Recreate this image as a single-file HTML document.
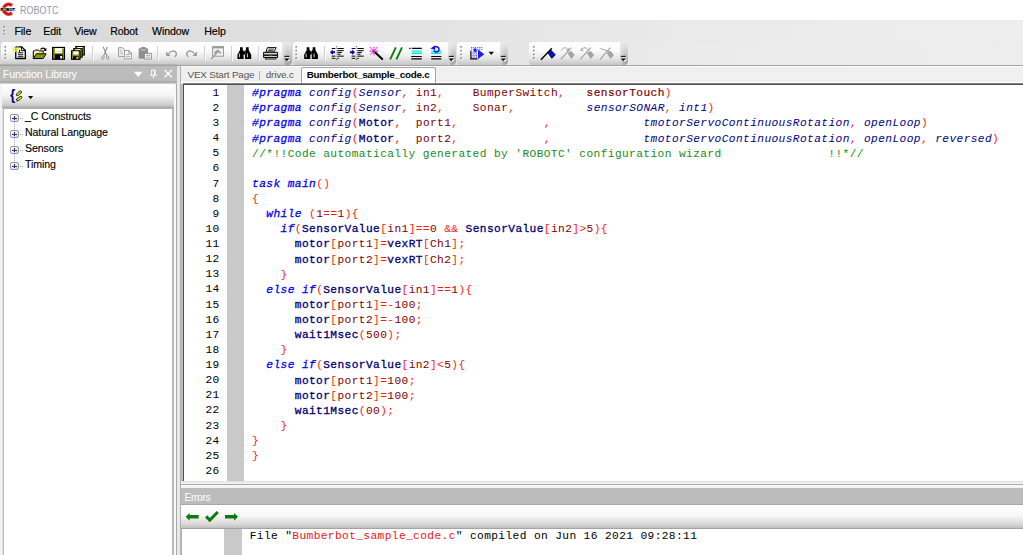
<!DOCTYPE html>
<html lang="en">
<head>
<meta charset="utf-8">
<title>ROBOTC</title>
<style>
*{box-sizing:border-box;margin:0;padding:0}
html,body{width:1023px;height:555px;overflow:hidden;background:#fff}
body{position:relative;font-family:"Liberation Sans",sans-serif;font-size:10.4px;color:#000}
.abs{position:absolute}
/* title bar */
#title{left:0;top:0;width:1023px;height:20px;background:#fff}
#title .cap{left:20px;top:3px;font-size:11px;line-height:14px;color:#9898a6;white-space:nowrap;transform:scaleX(0.816);transform-origin:0 0}
/* menu bar */
#menu{left:0;top:20px;width:1023px;height:22px;background:linear-gradient(90deg,#d9d9d9 0,#e0e0e0 300px,#eaeaea 700px,#eeeeee 100%)}
#menu span{position:absolute;top:4px;line-height:14px;font-size:10.6px;white-space:nowrap;letter-spacing:-0.1px;-webkit-text-stroke:0.18px #000}
/* toolbar row */
#tbrow{left:0;top:42px;width:1023px;height:23px;background:linear-gradient(90deg,#d8d8d8 0,#dedede 300px,#ebebeb 700px,#ededed 100%)}
.tb{position:absolute;top:0;height:22.5px;border-radius:3px 0 0 3px;background:linear-gradient(180deg,#fff 0,#fbfbfb 38%,#e6e6e6 70%,#c5c5c5 100%)}
.tbcap{position:absolute;top:0;height:22.5px;border-radius:0 4px 4px 0;background:linear-gradient(90deg,rgba(236,236,236,.75) 0,rgba(236,236,236,0) 4.5px),linear-gradient(180deg,#ebebeb 0,#d0d0d0 40%,#b2b2b2 75%,#a2a2a2 100%)}
.grip{position:absolute;width:2px;height:13px;top:4.5px;background:repeating-linear-gradient(180deg,#8c8c8c 0,#8c8c8c 1.2px,rgba(255,255,255,.9) 1.2px,rgba(255,255,255,.9) 2.2px,transparent 2.2px,transparent 3.55px)}
.sep{position:absolute;top:4.3px;width:1px;height:14.7px;background:#d0d0d0;box-shadow:1px 0 0 #fcfcfc}
.ic{position:absolute;top:4px;width:14.2px;height:14.2px;overflow:visible}
.rowline{left:0;top:65px;width:1023px;height:1px;background:#a2a2a2}
/* left panel */
#lp{left:0;top:66px;width:184px;height:489px;background:linear-gradient(90deg,#f3f3f3 0,#f3f3f3 2.2px,#f8f8f8 2.2px,#f8f8f8 176px,#a9a9a9 176px,#a9a9a9 177.3px,#e9e9e9 177.3px,#e9e9e9 179.8px,#b2b2b2 179.8px,#b2b2b2 181px,#c6c6c6 183px,#c6c6c6 184px)}
#lphead{left:0;top:0;width:176.5px;height:14.9px;background:#bcbcbc;box-shadow:0 1.7px 0 #a8a8a8,0 3px 0 #cbcbcb;color:#fff;font-size:10.7px;line-height:16px;padding-left:2.8px;letter-spacing:-0.17px;white-space:nowrap}
#lptool{left:2.4px;top:18.2px;width:171.4px;height:23.8px;border-radius:2px 2px 0 0;background:linear-gradient(180deg,#fff 0,#f6f6f6 45%,#d0d0d0 85%,#b4b4b4 97%,#a4a4a4 100%)}
#tree{left:3px;top:42px;width:170.8px;height:447px;background:#fff;border-left:1px solid #bdbdbd;border-top:1px solid #b0b0b0;border-right:2px solid #b9b9b9;box-shadow:-1px 0 0 #dedede}
.tl{-webkit-text-stroke:0.12px #000;position:absolute;left:20.9px;font-size:10.6px;line-height:14px;white-space:nowrap;letter-spacing:-0.08px}
.pm{position:absolute;left:6.4px;width:8.3px;height:8.3px;border:1px solid #959595;border-radius:1.8px;background:linear-gradient(135deg,#fff,#d8d8d8)}
.pm:before{content:"";position:absolute;left:1.1px;top:2.65px;width:4.1px;height:1px;background:#1c2f8a}
.pm:after{content:"";position:absolute;left:2.65px;top:1.1px;width:1px;height:4.1px;background:#1c2f8a}
/* editor */
#tabs{left:181px;top:66px;width:842px;height:18px;background:linear-gradient(180deg,#fdfdfd 0,#fdfdfd 1px,#efefef 1px,#f0f0f0 15.4px,#fbfbfb 15.6px,#fbfbfb 100%)}
#tabs span{position:absolute;white-space:nowrap;font-size:9.9px;line-height:14px;top:2px;color:#555;letter-spacing:-0.17px}
#edtop{left:182.6px;top:83.4px;width:841px;height:1.6px;background:linear-gradient(180deg,#9c9c9c,#3a3a3a)}
#ed{left:183px;top:85px;width:840px;height:396px;background:#fff;border-left:1px solid #4e4e4e}
.gut{position:absolute;background:#c9c9c9}
pre{position:absolute;font-family:"Liberation Mono",monospace;font-size:11.2px;letter-spacing:0.379px;line-height:15.12px;white-space:pre;color:#000}
.k{color:#0000f0;font-style:italic;-webkit-text-stroke:0.27px #0000f0}
.n{color:#000080;font-style:italic}
.b{color:#000070;-webkit-text-stroke:0.3px #000070}
.p{color:#ff1a10}
.m{color:#800000}
.mb{color:#800000;-webkit-text-stroke:0.2px #800000}
.g{color:#1a8c1a}
/* errors */
#errhead{left:181px;top:488px;width:842px;height:17px;background:#bcbcbc;color:#fff;font-size:10.2px;line-height:19.6px;padding-left:3.4px;letter-spacing:-0.3px;border-bottom:1px solid #a6a6a6}
#errtool{left:181px;top:505px;width:842px;height:22.5px;background:linear-gradient(180deg,#fff 0,#f8f8f8 45%,#d6d6d6 86%,#bebebe 100%)}
#errout{left:181px;top:528px;width:842px;height:27px;background:#fff;border-top:1px solid #a4a4a4;border-left:1px solid #b4b4b4}
</style>
</head>
<body>
<!-- TITLE -->
<div id="title" class="abs">
  <svg class="abs" style="left:0;top:0" width="18" height="20" viewBox="0 0 18 20">
    <path d="M11.9 5.6 A4.9 4.9 0 1 0 11.9 12.8" fill="none" stroke="#d8161c" stroke-width="3.3"/>
    <path d="M12.6 4.3 A6.3 6.3 0 1 0 12.6 14.1" fill="none" stroke="#e03a3e" stroke-width="1" stroke-dasharray="1.5 1.3"/>
    <rect x="0.4" y="7.7" width="14.8" height="3.3" fill="#fff"/>
    <text x="0.6" y="10.8" font-family="Liberation Sans, sans-serif" font-weight="bold" font-size="4.2" fill="#000" stroke="#000" stroke-width="0.25" textLength="14.4" lengthAdjust="spacingAndGlyphs">ROBOT</text>
    <circle cx="4.7" cy="9.4" r="0.7" fill="#e8c800"/>
  </svg>
  <div class="abs cap">ROBOTC</div>
</div>
<!-- MENU -->
<div id="menu" class="abs">
  <svg class="abs" style="left:0;top:0" width="10" height="22" viewBox="0 0 10 22"><rect x="4.4" y="6.9" width="1.6" height="1.6" fill="#fff"/><rect x="3.6" y="6.1" width="1.6" height="1.6" fill="#858585"/><rect x="4.4" y="10.6" width="1.6" height="1.6" fill="#fff"/><rect x="3.6" y="9.8" width="1.6" height="1.6" fill="#858585"/><rect x="4.4" y="14.0" width="1.6" height="1.6" fill="#fff"/><rect x="3.6" y="13.2" width="1.6" height="1.6" fill="#858585"/></svg>
  <span style="left:14.5px">File</span>
  <span style="left:43.3px">Edit</span>
  <span style="left:74.3px">View</span>
  <span style="left:110.2px">Robot</span>
  <span style="left:152px">Window</span>
  <span style="left:204.3px">Help</span>
</div>
<!-- TOOLBARS -->
<div id="tbrow" class="abs">
  <div class="tb" style="left:1px;width:281px"></div><div class="tbcap" style="left:282px;width:10px"></div>
  <div class="tb" style="left:292.5px;width:155px"></div><div class="tbcap" style="left:447.5px;width:8.5px"></div>
  <div class="tb" style="left:457px;width:42.5px"></div><div class="tbcap" style="left:499.5px;width:8.5px"></div>
  <div class="tb" style="left:529px;width:90.5px"></div><div class="tbcap" style="left:619.5px;width:8.5px"></div>
  <svg class="abs" style="left:0;top:0" width="540" height="23" viewBox="0 0 540 23"><rect x="5.3" y="4.8" width="1.6" height="1.6" fill="#fff"/><rect x="4.5" y="4.0" width="1.6" height="1.6" fill="#858585"/><rect x="5.3" y="8.6" width="1.6" height="1.6" fill="#fff"/><rect x="4.5" y="7.8" width="1.6" height="1.6" fill="#858585"/><rect x="5.3" y="12.4" width="1.6" height="1.6" fill="#fff"/><rect x="4.5" y="11.6" width="1.6" height="1.6" fill="#858585"/><rect x="5.3" y="16.1" width="1.6" height="1.6" fill="#fff"/><rect x="4.5" y="15.3" width="1.6" height="1.6" fill="#858585"/><rect x="296.2" y="4.8" width="1.6" height="1.6" fill="#fff"/><rect x="295.4" y="4.0" width="1.6" height="1.6" fill="#858585"/><rect x="296.2" y="8.6" width="1.6" height="1.6" fill="#fff"/><rect x="295.4" y="7.8" width="1.6" height="1.6" fill="#858585"/><rect x="296.2" y="12.4" width="1.6" height="1.6" fill="#fff"/><rect x="295.4" y="11.6" width="1.6" height="1.6" fill="#858585"/><rect x="296.2" y="16.1" width="1.6" height="1.6" fill="#fff"/><rect x="295.4" y="15.3" width="1.6" height="1.6" fill="#858585"/><rect x="461.0" y="4.8" width="1.6" height="1.6" fill="#fff"/><rect x="460.2" y="4.0" width="1.6" height="1.6" fill="#858585"/><rect x="461.0" y="8.6" width="1.6" height="1.6" fill="#fff"/><rect x="460.2" y="7.8" width="1.6" height="1.6" fill="#858585"/><rect x="461.0" y="12.4" width="1.6" height="1.6" fill="#fff"/><rect x="460.2" y="11.6" width="1.6" height="1.6" fill="#858585"/><rect x="461.0" y="16.1" width="1.6" height="1.6" fill="#fff"/><rect x="460.2" y="15.3" width="1.6" height="1.6" fill="#858585"/><rect x="533.8" y="4.8" width="1.6" height="1.6" fill="#fff"/><rect x="533.0" y="4.0" width="1.6" height="1.6" fill="#858585"/><rect x="533.8" y="8.6" width="1.6" height="1.6" fill="#fff"/><rect x="533.0" y="7.8" width="1.6" height="1.6" fill="#858585"/><rect x="533.8" y="12.4" width="1.6" height="1.6" fill="#fff"/><rect x="533.0" y="11.6" width="1.6" height="1.6" fill="#858585"/><rect x="533.8" y="16.1" width="1.6" height="1.6" fill="#fff"/><rect x="533.0" y="15.3" width="1.6" height="1.6" fill="#858585"/></svg>
  <div class="sep" style="left:91.5px"></div>
  <div class="sep" style="left:157px"></div>
  <div class="sep" style="left:204px"></div>
  <div class="sep" style="left:230.5px"></div>
  <div class="sep" style="left:257.5px"></div>
  <div class="sep" style="left:324px"></div>
<!--ICONS-START-->
  <svg class="abs" style="left:0;top:0" width="1023" height="23" viewBox="0 42 1023 23" shape-rendering="geometricPrecision">
    <defs>
      <g id="binoc">
        <path d="M3.2 1.4 H6.2 V4 L7.2 5 V14.2 H0.4 V9.5 L3.2 4.4 Z M12.8 1.4 H9.8 V4 L8.8 5 V14.2 H15.6 V9.5 L12.8 4.4 Z M7 5.6 H9 V9.4 H7 Z" fill="#000"/>
        <path d="M2.6 8.2 V12.4 M11.4 8.2 V12.4" stroke="#fff" stroke-width="0.9"/>
      </g>
      <g id="capar">
        <path d="M0.6 1.2 H5.6" stroke="#fff" stroke-width="1.1"/>
        <path d="M0.8 3.4 H6 L3.4 6.2 Z" fill="#fff"/>
        <path d="M0 0.5 H5" stroke="#111" stroke-width="1.1"/>
        <path d="M0 2.6 H5 L2.5 5.3 Z" fill="#111"/>
      </g>
      <g id="gflag">
        <path d="M0.5 14.9 L12.2 1.6" stroke="#9d9d9d" stroke-width="1.2" fill="none"/>
        <path d="M7.9 7.6 L11.9 5.2 L16.2 10 L12.2 14.4 Z" fill="#a4a4a4"/>
      </g>
    </defs>
    <!-- 1 new -->
    <g transform="translate(12,45.7) scale(0.89)">
      <path d="M4.2 1.3 H11 L15 5.3 V14.4 H4.2 Z" fill="#fff" stroke="#000" stroke-width="1.5" stroke-linejoin="round"/>
      <path d="M10.6 1.3 V5.6 H15" fill="none" stroke="#000" stroke-width="1.1"/>
      <path d="M6.5 8 H12.7 M6.5 10.2 H12.7 M6.5 12.4 H12.7 M8.6 4.6 V7.4" stroke="#000" stroke-width="1.1"/>
      <path d="M1 0.6 L7 6.6 M7 0.6 L1 6.6 M4 0 V7.2 M0.3 3.6 H7.7" stroke="#e8e800" stroke-width="1.15" stroke-dasharray="2 0.5"/>
    </g>
    <!-- 2 open -->
    <g transform="translate(32.5,46.1) scale(0.89)">
      <path d="M0.9 14 V5.4 H2 L3 4.4 H6.4 L7.4 5.4 H12 V8" fill="#f4e9a2" stroke="#000" stroke-width="1.1" stroke-linejoin="round"/>
      <path d="M0.9 14 L4.4 8.6 H15.3 L12 14 Z" fill="#8c9418" stroke="#000" stroke-width="1.1" stroke-linejoin="round"/>
      <path d="M9 3.8 C10.4 1.6 13.2 1.6 14.4 4.2" fill="none" stroke="#000" stroke-width="1.4"/>
      <path d="M15.6 1.8 V5.4 H12.2 Z" fill="#000"/>
    </g>
    <!-- 3 save -->
    <g transform="translate(51.4,46.2) scale(0.89)">
      <rect x="1.4" y="1.4" width="13.3" height="13.3" fill="#8e9018" stroke="#000" stroke-width="1.3"/>
      <rect x="4" y="2.1" width="8" height="5.6" fill="#fff"/>
      <path d="M4 6 H12" stroke="#c8c8c8" stroke-width="0.8"/>
      <rect x="3.8" y="9.1" width="9" height="5.4" fill="#000"/>
      <rect x="9.8" y="10.9" width="2.3" height="2.9" fill="#fff"/>
      <rect x="12.8" y="2.2" width="1" height="1" fill="#fff"/>
    </g>
    <!-- 4 save all -->
    <g transform="translate(70.8,45.7) scale(0.89)">
      <rect x="5.6" y="0.9" width="9.6" height="9.6" fill="#8a8a1c" stroke="#000" stroke-width="1.2"/>
      <rect x="7.6" y="1.4" width="5.6" height="2" fill="#fff"/>
      <rect x="3.2" y="3.3" width="9.6" height="9.6" fill="#8a8a1c" stroke="#000" stroke-width="1.2"/>
      <rect x="5.2" y="3.9" width="5.6" height="2" fill="#fff"/>
      <rect x="0.8" y="5.7" width="9.6" height="9.6" fill="#8a8a1c" stroke="#000" stroke-width="1.2"/>
      <rect x="2.8" y="6.3" width="5.8" height="3.6" fill="#fff"/>
      <rect x="2.6" y="11.8" width="6" height="3.4" fill="#000"/>
      <rect x="6.4" y="12.6" width="1.4" height="2.2" fill="#fff"/>
    </g>
    <!-- 5 cut -->
    <g transform="translate(98,46.1) scale(0.89)" fill="none" stroke="#8f8f8f">
      <path d="M5.8 0.8 L10 10.8 M10.6 0.8 L6.4 10.8" stroke-width="1.15"/>
      <ellipse cx="5.5" cy="12.9" rx="1.3" ry="2.1" transform="rotate(18 5.5 12.9)" stroke-width="0.95"/>
      <ellipse cx="10.9" cy="12.9" rx="1.3" ry="2.1" transform="rotate(-18 10.9 12.9)" stroke-width="0.95"/>
    </g>
    <!-- 6 copy -->
    <g transform="translate(117.8,46.1) scale(0.89)" stroke="#939393" stroke-width="1">
      <path d="M0.8 1.8 H5.4 L7.6 4 V11.6 H0.8 Z" fill="#f3f3f3"/>
      <path d="M2.2 4.6 H5 M2.2 6.6 H6 M2.2 8.6 H6" stroke="#b5b5b5" stroke-width="0.9"/>
      <path d="M7.6 5 H12.6 L15.4 7.8 V14.2 H7.6 Z" fill="#fbfbfb"/>
      <path d="M12.4 5.2 V8 H15.2" fill="none"/>
      <path d="M9.2 9.4 H13.8 M9.2 11.6 H13.8" stroke-width="0.9"/>
    </g>
    <!-- 7 paste -->
    <g transform="translate(138,46.1) scale(0.89)">
      <rect x="0.8" y="2.4" width="10.4" height="11.8" rx="1" fill="#8f8f8f"/>
      <rect x="3.4" y="1.1" width="5.2" height="2.6" rx="0.8" fill="#8f8f8f"/>
      <path d="M3.2 4.4 H8.8" stroke="#dcdcdc" stroke-width="0.9"/>
      <rect x="7.4" y="8.2" width="7.6" height="6.4" fill="#f5f5f5" stroke="#8f8f8f" stroke-width="1"/>
      <path d="M9 10.6 H13.4 M9 12.6 H13.4" stroke="#9a9a9a" stroke-width="0.9"/>
    </g>
    <!-- 8 undo -->
    <g transform="translate(164.5,46.1) scale(0.89)">
      <path d="M4.6 8.6 C6.4 5 11.4 4.6 13 7.4 C14 9.4 12.8 11 11.4 12" fill="none" stroke="#9b9b9b" stroke-width="1.5"/>
      <path d="M1.8 6 V11.2 H7 Z" fill="#9b9b9b"/>
    </g>
    <!-- 9 redo -->
    <g transform="translate(198.6,46.1) scale(-0.89,0.89)">
      <path d="M4.6 8.6 C6.4 5 11.4 4.6 13 7.4 C14 9.4 12.8 11 11.4 12" fill="none" stroke="#9b9b9b" stroke-width="1.5"/>
      <path d="M1.8 6 V11.2 H7 Z" fill="#9b9b9b"/>
    </g>
    <!-- 10 compile -->
    <g transform="translate(210.5,46) scale(0.89)">
      <rect x="2.4" y="0.7" width="12.2" height="10.8" fill="#f0f0f0" stroke="#9a9a9a" stroke-width="1.1"/>
      <rect x="2.4" y="0.7" width="12.2" height="1.9" fill="#9a9a9a"/>
      <path d="M3.8 7.2 L8 3.8 L12.4 7.6 L10.4 8.6 L8.4 6.8 L5.4 8.6 Z" fill="#9a9a9a"/>
      <path d="M7.6 7 L0.9 14.6" stroke="#9a9a9a" stroke-width="1.4"/>
    </g>
    <!-- 11 binoculars -->
    <use href="#binoc" transform="translate(237.1,46.1) scale(0.905)"/>
    <!-- 12 print -->
    <g transform="translate(262.8,46.1) scale(0.89)">
      <path d="M5.2 1.7 H15 L12.6 6.6 H3.6 Z" fill="#fff" stroke="#000" stroke-width="1.1" stroke-linejoin="round"/>
      <path d="M6.4 3.4 H12.6 M5.8 4.9 H11.8" stroke="#000" stroke-width="0.8"/>
      <path d="M0.9 7 H16.6 V12.8 H0.9 Z" fill="#d6d6d6" stroke="#000" stroke-width="1.1"/>
      <path d="M1.4 10.2 H16.2" stroke="#000" stroke-width="1.6"/>
      <rect x="7" y="10.8" width="3.6" height="1.3" fill="#e8e000"/>
      <path d="M2.4 13.2 H15.2 V15 H2.4 Z" fill="#000"/>
      <path d="M3 14 H14.6" stroke="#d0d0d0" stroke-width="0.7"/>
    </g>
    <!-- 13 binoculars -->
    <use href="#binoc" transform="translate(303.8,46.1) scale(0.905)"/>
    <!-- 14 outdent -->
    <g transform="translate(329.7,46) scale(0.89)">
      <path d="M2.2 2.8 H6.4 M8.6 2.8 H15.8 M8.6 5.2 H15.8 M8.6 7.2 H13.6 M8.6 9.2 H12.2 M2.2 11.4 H6.4 M8.6 11.4 H15.8 M2.2 13.8 H6.4 M8.6 13.8 H10.4" stroke="#000" stroke-width="1.1"/>
      <path d="M7.5 0.4 V1.4 M7.5 14.8 V15.8" stroke="#000" stroke-width="1"/><path d="M7.5 2.2 V14.4" stroke="#000" stroke-opacity="0.45" stroke-width="0.9" stroke-dasharray="1 1.3"/>
      <path d="M0.2 7.1 L3.2 4.3 L4 6 H6 V8.2 H4 L3.2 9.9 Z" fill="#0c0ca8"/>
    </g>
    <!-- 15 indent -->
    <g transform="translate(349.7,46) scale(0.89)">
      <path d="M2.2 2.8 H6.4 M8.6 2.8 H15.8 M8.6 5.2 H15.8 M8.6 7.2 H13.6 M8.6 9.2 H12.2 M2.2 11.4 H6.4 M8.6 11.4 H15.8 M2.2 13.8 H6.4 M8.6 13.8 H10.4" stroke="#000" stroke-width="1.1"/>
      <path d="M7.5 0.4 V1.4 M7.5 14.8 V15.8" stroke="#000" stroke-width="1"/><path d="M7.5 2.2 V14.4" stroke="#000" stroke-opacity="0.45" stroke-width="0.9" stroke-dasharray="1 1.3"/>
      <path d="M6 7.1 L3 4.3 L2.2 6 H0.2 V8.2 H2.2 L3 9.9 Z" fill="#0c0ca8"/>
    </g>
    <!-- 16 wand -->
    <g>
      <path d="M370.2 47.4 L377.6 54.8 M377.6 47.4 L370.2 54.8 M373.9 46.8 V55.4 M369.6 51.1 H378.2" stroke="#f418f4" stroke-width="1.15" stroke-dasharray="1.5 0.5"/>
      <path d="M374.2 51.4 L382.2 59" stroke="#000" stroke-width="2" stroke-linecap="round"/>
      <path d="M373.6 50.6 L375.4 52.4" stroke="#777" stroke-width="1.6"/>
    </g>
    <!-- 17 comment -->
    <path d="M390.2 59.4 L395.8 47.4 M396.4 59.4 L402 47.4" stroke="#0c7c0c" stroke-width="1.9"/>
    <!-- 18 lines -->
    <g>
      <path d="M409.2 48.4 H410.6 M411.8 48.4 H421.8 M411.2 56.5 H421.8 M411.2 58.9 H421.8" stroke="#000" stroke-width="1.1"/>
      <path d="M411.8 51.1 H421.8 M411.8 53.2 H421.8" stroke="#00e6e6" stroke-width="1.35"/>
    </g>
    <!-- 19 uncomment -->
    <g>
      <path d="M431.2 51.1 H441.4 M431.2 53.2 H441.4" stroke="#00e6e6" stroke-width="1.35"/>
      <path d="M431.2 56.5 H441.4 M431.2 58.9 H441.4" stroke="#000" stroke-width="1.1"/>
      <path d="M433.9 50.6 A2.7 2.7 0 1 0 434.6 47.2" fill="none" stroke="#1414d0" stroke-width="1.5"/>
      <path d="M430.4 48.6 L434.8 45.6 L435.4 50 Z" fill="#1414d0"/>
    </g>
    <!-- 20 run -->
    <g>
      <path d="M470.9 50.8 V58.9 H477.4" fill="none" stroke="#000" stroke-width="1.2"/>
      <path d="M471.2 47.6 H483 M471.2 49.3 H483" stroke="#2222ee" stroke-width="0.9" stroke-dasharray="1 1"/>
      <path d="M472.6 52 H477 M472.6 53.7 H477 M472.6 55.4 H477 M472.6 57.1 H477" stroke="#2222ee" stroke-width="0.9" stroke-dasharray="0.9 0.9"/>
      <path d="M474 48.4 H476.4 V50.4 H477.4 L475.2 52.4 L473 50.4 H474 Z" fill="#1c1cf0"/>
      <path d="M478 49.6 V59 L484.3 54.3 Z" fill="#1c1cf0"/>
      <path d="M488.5 51.8 H494 L491.25 55 Z" fill="#111"/>
    </g>
    <!-- 21 flag -->
    <g>
      <path d="M540.9 59.7 L551.8 48.3" stroke="#000" stroke-width="1.4"/>
      <path d="M547.8 52.6 L551 50.2 L555.3 54.9 L551.8 58.3 Z" fill="#0a0ae6" stroke="#000" stroke-width="0.9" stroke-linejoin="round"/>
    </g>
    <!-- 22-24 gray flags -->
    <g transform="translate(560.4,46.2) scale(0.89)">
      <use href="#gflag"/>
      <path d="M1.2 4.6 C2.6 1.2 6.8 0.8 8.6 3.8" fill="none" stroke="#a2a2a2" stroke-width="1.1"/>
      <path d="M9.6 1.8 V5.4 H6.2 Z" fill="#a2a2a2"/>
    </g>
    <g transform="translate(579.8,46.2) scale(0.89)">
      <use href="#gflag"/>
      <path d="M2 3.8 C3.8 0.8 8 1.2 9.4 4.6" fill="none" stroke="#a2a2a2" stroke-width="1.1"/>
      <path d="M1 1.8 V5.4 H4.4 Z" fill="#a2a2a2"/>
    </g>
    <g transform="translate(599.6,46.2) scale(0.89)">
      <use href="#gflag"/>
      <path d="M0.8 2.7 L12.3 6.3" fill="none" stroke="#a2a2a2" stroke-width="1.1"/>
    </g>
    <!-- cap arrows -->
    <use href="#capar" transform="translate(284.4,55.9)"/>
    <use href="#capar" transform="translate(448.8,55.9)"/>
    <use href="#capar" transform="translate(500.8,55.9)"/>
    <use href="#capar" transform="translate(620.8,55.9)"/>
  </svg>
<!--ICONS-END-->
</div>
<div class="abs rowline"></div>
<div class="abs" style="left:0;top:64.2px;width:177px;height:1px;background:#b2b2b2"></div>
<!-- LEFT PANEL -->
<div id="lp" class="abs">
  <div id="lphead" class="abs">Function Library</div>
  <svg class="abs" style="left:130px;top:0" width="47" height="17" viewBox="130 66 47 17">
    <path d="M134 71.8 H142.4 L138.2 77 Z" fill="#fff"/>
    <path d="M151.6 75 V70 H155.2 V75 M154.4 70 V75" fill="none" stroke="#fff" stroke-width="0.9"/>
    <path d="M150 75.2 H156.9 M153.4 75.2 V78.4" stroke="#fff" stroke-width="1"/>
    <path d="M164.5 70 L171.8 77.2 M171.8 70 L164.5 77.2" stroke="#fff" stroke-width="1.3"/>
  </svg>
  <div id="lptool" class="abs">
    <div class="abs" style="left:8px;top:3.3px;font-family:'Liberation Sans',sans-serif;font-weight:bold;font-size:14.2px;line-height:16px;color:#000080;transform:scaleX(0.95);transform-origin:0 0">{</div>
    <svg class="abs" style="left:13px;top:6.3px" width="20" height="12" viewBox="15 90 20 12">
      <path d="M17.4 94.6 L20.4 92" stroke="#222" stroke-width="3" stroke-linecap="round"/>
      <path d="M17.6 94.4 L20.2 92.2" stroke="#e6de00" stroke-width="1.7" stroke-linecap="round"/>
      <path d="M17.6 99.8 L20.8 97.4" stroke="#222" stroke-width="3" stroke-linecap="round"/>
      <path d="M17.8 99.6 L20.6 97.6" stroke="#e6de00" stroke-width="1.7" stroke-linecap="round"/>
      <path d="M28 95.9 H33.2 L30.6 99.2 Z" fill="#111"/>
    </svg>
  </div>
  <div id="tree" class="abs">
    <div class="abs" style="left:10.2px;top:9px;width:1px;height:48px;background:repeating-linear-gradient(180deg,#a8a8a8 0,#a8a8a8 1px,transparent 1px,transparent 2px)"></div>
    <div class="abs" style="left:14px;top:8.6px;width:5px;height:1px;background:repeating-linear-gradient(90deg,#a8a8a8 0,#a8a8a8 1px,transparent 1px,transparent 2px)"></div><div class="pm" style="top:5.1px"></div><div class="tl" style="top:-0.2px">_C Constructs</div>
    <div class="abs" style="left:14px;top:24.6px;width:5px;height:1px;background:repeating-linear-gradient(90deg,#a8a8a8 0,#a8a8a8 1px,transparent 1px,transparent 2px)"></div><div class="pm" style="top:21.1px"></div><div class="tl" style="top:15.8px">Natural Language</div>
    <div class="abs" style="left:14px;top:40.6px;width:5px;height:1px;background:repeating-linear-gradient(90deg,#a8a8a8 0,#a8a8a8 1px,transparent 1px,transparent 2px)"></div><div class="pm" style="top:37.1px"></div><div class="tl" style="top:31.8px">Sensors</div>
    <div class="abs" style="left:14px;top:56.6px;width:5px;height:1px;background:repeating-linear-gradient(90deg,#a8a8a8 0,#a8a8a8 1px,transparent 1px,transparent 2px)"></div><div class="pm" style="top:53.1px"></div><div class="tl" style="top:47.8px">Timing</div>
  </div>
</div>
<!-- TABS -->
<div id="tabs" class="abs">
  <span style="left:6.5px">VEX Start Page</span>
  <span style="left:84.8px">drive.c</span>
  <div class="abs" style="left:78px;top:5px;width:1px;height:9px;background:#b4b4b4"></div>
  <div class="abs" id="atab" style="left:120.2px;top:1.4px;width:134.4px;height:17px;background:#fff;border:1px solid #a3a3a3;border-bottom:none;border-radius:2.5px 2.5px 0 0"></div>
  <span id="atxt" style="left:125.7px;color:#000;font-weight:bold;letter-spacing:-0.27px">Bumberbot_sample_code.c</span>
</div>
<div id="edtop" class="abs"></div>
<!-- EDITOR -->
<div id="ed" class="abs">
  <div class="gut" style="left:43.2px;top:0;width:16.6px;height:396px"></div>
<pre id="ln" style="left:0;top:0.75px;width:35.7px;text-align:right"> 1
 2
 3
 4
 5
 6
 7
 8
 9
10
11
12
13
14
15
16
17
18
19
20
21
22
23
24
25
26</pre>
<pre id="code" style="left:68.1px;top:1.2px;letter-spacing:0.4px"><span class="k">#pragma</span> <span class="n">config</span><span class="p">(</span><span class="n">Sensor</span><span class="p">,</span> <span class="m">in1</span><span class="p">,</span>    <span class="m">BumperSwitch</span><span class="p">,</span>   <span class="mb">sensorTouch</span><span class="p">)</span>
<span class="k">#pragma</span> <span class="n">config</span><span class="p">(</span><span class="n">Sensor</span><span class="p">,</span> <span class="m">in2</span><span class="p">,</span>    <span class="m">Sonar</span><span class="p">,</span>          <span class="n">sensorSONAR</span><span class="p">,</span> <span class="n">int1</span><span class="p">)</span>
<span class="k">#pragma</span> <span class="n">config</span><span class="p">(</span><span class="b">Motor</span><span class="p">,</span>  <span class="m">port1</span><span class="p">,</span>            <span class="p">,</span>             <span class="n">tmotorServoContinuousRotation</span><span class="p">,</span> <span class="n">openLoop</span><span class="p">)</span>
<span class="k">#pragma</span> <span class="n">config</span><span class="p">(</span><span class="b">Motor</span><span class="p">,</span>  <span class="m">port2</span><span class="p">,</span>            <span class="p">,</span>             <span class="n">tmotorServoContinuousRotation</span><span class="p">,</span> <span class="n">openLoop</span><span class="p">,</span> <span class="n">reversed</span><span class="p">)</span>
<span class="g">//*!!Code automatically generated by 'ROBOTC' configuration wizard               !!*//</span>

<span class="k">task main</span><span class="p">()</span>
<span class="p">{</span>
  <span class="k">while</span> <span class="p">(</span><span class="m">1</span><span class="p">==</span><span class="m">1</span><span class="p">){</span>
    <span class="k">if</span><span class="p">(</span><span class="b">SensorValue</span><span class="p">[</span><span class="m">in1</span><span class="p">]==</span><span class="m">0</span> <span class="p">&amp;&amp;</span> <span class="b">SensorValue</span><span class="p">[</span><span class="m">in2</span><span class="p">]&gt;</span><span class="m">5</span><span class="p">){</span>
      <span class="b">motor</span><span class="p">[</span><span class="m">port1</span><span class="p">]=</span><span class="b">vexRT</span><span class="p">[</span><span class="m">Ch1</span><span class="p">];</span>
      <span class="b">motor</span><span class="p">[</span><span class="m">port2</span><span class="p">]=</span><span class="b">vexRT</span><span class="p">[</span><span class="m">Ch2</span><span class="p">];</span>
    <span class="p">}</span>
  <span class="k">else if</span><span class="p">(</span><span class="b">SensorValue</span><span class="p">[</span><span class="m">in1</span><span class="p">]==</span><span class="m">1</span><span class="p">){</span>
      <span class="b">motor</span><span class="p">[</span><span class="m">port1</span><span class="p">]=-</span><span class="m">100</span><span class="p">;</span>
      <span class="b">motor</span><span class="p">[</span><span class="m">port2</span><span class="p">]=-</span><span class="m">100</span><span class="p">;</span>
      <span class="b">wait1Msec</span><span class="p">(</span><span class="m">500</span><span class="p">);</span>
    <span class="p">}</span>
  <span class="k">else if</span><span class="p">(</span><span class="b">SensorValue</span><span class="p">[</span><span class="m">in2</span><span class="p">]&lt;</span><span class="m">5</span><span class="p">){</span>
      <span class="b">motor</span><span class="p">[</span><span class="m">port1</span><span class="p">]=</span><span class="m">100</span><span class="p">;</span>
      <span class="b">motor</span><span class="p">[</span><span class="m">port2</span><span class="p">]=</span><span class="m">100</span><span class="p">;</span>
      <span class="b">wait1Msec</span><span class="p">(</span><span class="m">00</span><span class="p">);</span>
    <span class="p">}</span>
<span class="p">}</span>
<span class="p">}</span>
</pre>
</div>
<!-- gap between editor and errors -->
<div class="abs" style="left:181px;top:481px;width:842px;height:7px;background:linear-gradient(180deg,#d9d9d9 0,#efefef 1.5px,#f0f0f0 2.5px,#a9a9a9 3.2px,#a9a9a9 4px,#f7f7f7 4.5px,#f2f2f2 100%)"></div>
<!-- ERRORS -->
<div id="errhead" class="abs">Errors</div>
<div id="errtool" class="abs">
  <svg class="abs" style="left:0;top:0" width="70" height="22.5" viewBox="181 505 70 22.5">
    <path d="M185.7 516.8 L189.6 512.9 V515 H198.7 V518.6 H189.6 V520.7 Z" fill="#0b7a0b"/>
    <path d="M205.1 517.4 L207.2 515.3 L209.8 518 L216.8 510.9 L218.9 513 L209.8 522.3 Z" fill="#0b7a0b"/>
    <path d="M238 516.8 L234.1 512.9 V515 H225 V518.6 H234.1 V520.7 Z" fill="#0b7a0b"/>
  </svg>
</div>
<div id="errout" class="abs">
  <div class="gut" style="left:42.2px;top:0;width:17.4px;height:27px"></div>
<pre style="left:67.7px;top:0.3px;letter-spacing:0.391px">File "<span style="color:#f01414">Bumberbot_sample_code.c</span>" compiled on Jun 16 2021 09:28:11</pre>
</div>
</body>
</html>
